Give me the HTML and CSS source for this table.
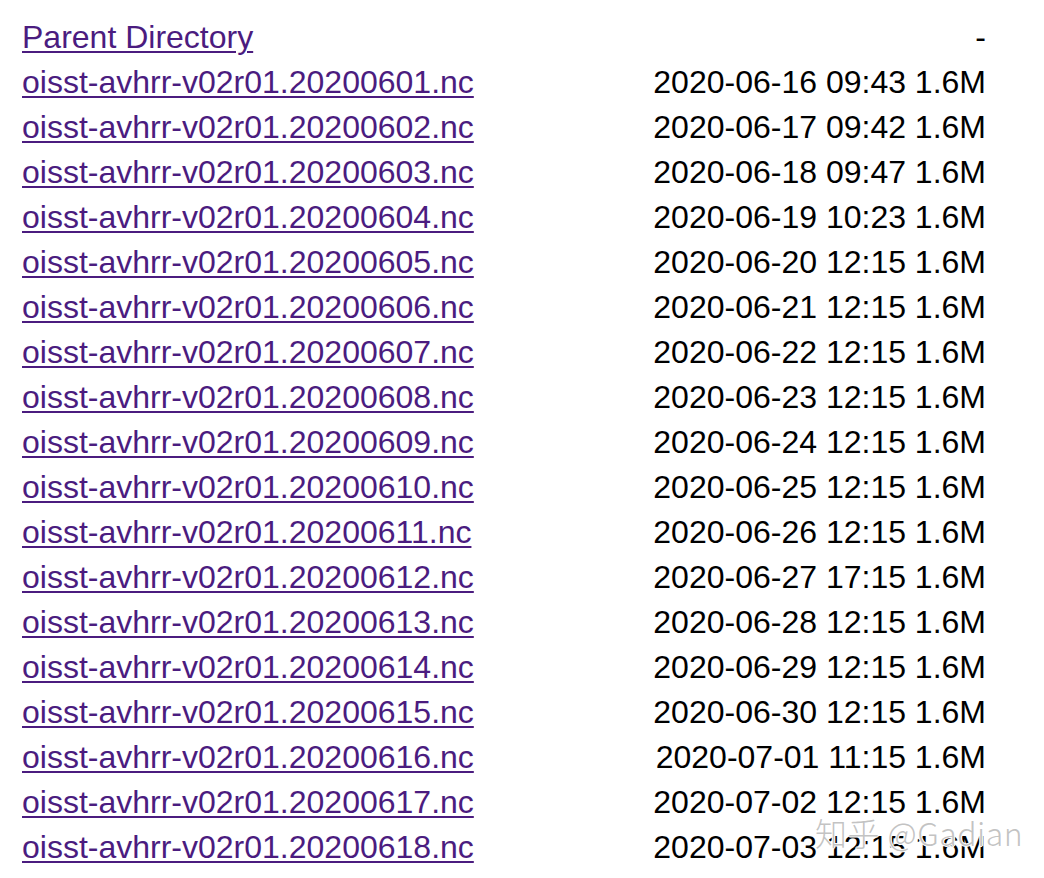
FILE: index.html
```html
<!DOCTYPE html>
<html>
<head>
<meta charset="utf-8">
<link rel="stylesheet" href="styles.css">
</head>
<body>
<div class="listing">
  <div class="row"><a href="#">Parent Directory</a><span class="meta">-</span></div>
  <div class="row"><a href="#">oisst-avhrr-v02r01.20200601.nc</a><span class="meta">2020-06-16 09:43 1.6M</span></div>
  <div class="row"><a href="#">oisst-avhrr-v02r01.20200602.nc</a><span class="meta">2020-06-17 09:42 1.6M</span></div>
  <div class="row"><a href="#">oisst-avhrr-v02r01.20200603.nc</a><span class="meta">2020-06-18 09:47 1.6M</span></div>
  <div class="row"><a href="#">oisst-avhrr-v02r01.20200604.nc</a><span class="meta">2020-06-19 10:23 1.6M</span></div>
  <div class="row"><a href="#">oisst-avhrr-v02r01.20200605.nc</a><span class="meta">2020-06-20 12:15 1.6M</span></div>
  <div class="row"><a href="#">oisst-avhrr-v02r01.20200606.nc</a><span class="meta">2020-06-21 12:15 1.6M</span></div>
  <div class="row"><a href="#">oisst-avhrr-v02r01.20200607.nc</a><span class="meta">2020-06-22 12:15 1.6M</span></div>
  <div class="row"><a href="#">oisst-avhrr-v02r01.20200608.nc</a><span class="meta">2020-06-23 12:15 1.6M</span></div>
  <div class="row"><a href="#">oisst-avhrr-v02r01.20200609.nc</a><span class="meta">2020-06-24 12:15 1.6M</span></div>
  <div class="row"><a href="#">oisst-avhrr-v02r01.20200610.nc</a><span class="meta">2020-06-25 12:15 1.6M</span></div>
  <div class="row"><a href="#">oisst-avhrr-v02r01.20200611.nc</a><span class="meta">2020-06-26 12:15 1.6M</span></div>
  <div class="row"><a href="#">oisst-avhrr-v02r01.20200612.nc</a><span class="meta">2020-06-27 17:15 1.6M</span></div>
  <div class="row"><a href="#">oisst-avhrr-v02r01.20200613.nc</a><span class="meta">2020-06-28 12:15 1.6M</span></div>
  <div class="row"><a href="#">oisst-avhrr-v02r01.20200614.nc</a><span class="meta">2020-06-29 12:15 1.6M</span></div>
  <div class="row"><a href="#">oisst-avhrr-v02r01.20200615.nc</a><span class="meta">2020-06-30 12:15 1.6M</span></div>
  <div class="row"><a href="#">oisst-avhrr-v02r01.20200616.nc</a><span class="meta">2020-07-01 11:15 1.6M</span></div>
  <div class="row"><a href="#">oisst-avhrr-v02r01.20200617.nc</a><span class="meta">2020-07-02 12:15 1.6M</span></div>
  <div class="row"><a href="#">oisst-avhrr-v02r01.20200618.nc</a><span class="meta">2020-07-03 12:15 1.6M</span></div>
</div>
<div class="watermark">知乎 @Gadian</div>
</body>
</html>
```

FILE: styles.css
```css
html, body {
  margin: 0;
  padding: 0;
  background: #ffffff;
}

body {
  font-family: "Liberation Sans", Arial, sans-serif;
  font-size: 32px;
  color: #000000;
  position: relative;
  width: 1044px;
  height: 878px;
  overflow: hidden;
}

.listing {
  display: flex;
  flex-direction: column;
  padding: 15px 58px 0 22px;
}

.row {
  display: flex;
  justify-content: space-between;
  align-items: baseline;
  height: 45px;
  line-height: 45px;
  white-space: nowrap;
}

.row a {
  color: #4b1c7f;
  text-decoration: underline;
  text-decoration-thickness: 2px;
  text-underline-offset: 3px;
}

.meta {
  text-align: right;
}

.watermark {
  position: absolute;
  left: 815px;
  top: 810px;
  font-family: "Noto Sans CJK SC", "Noto Sans", sans-serif;
  font-weight: 300;
  font-size: 32px;
  line-height: 44px;
  letter-spacing: 0.5px;
  color: rgba(185, 185, 185, 0.85);
  text-shadow: 1px 0 0 #fff, -1px 0 0 #fff, 0 1px 0 #fff, 0 -1px 0 #fff;
  white-space: nowrap;
}
```
